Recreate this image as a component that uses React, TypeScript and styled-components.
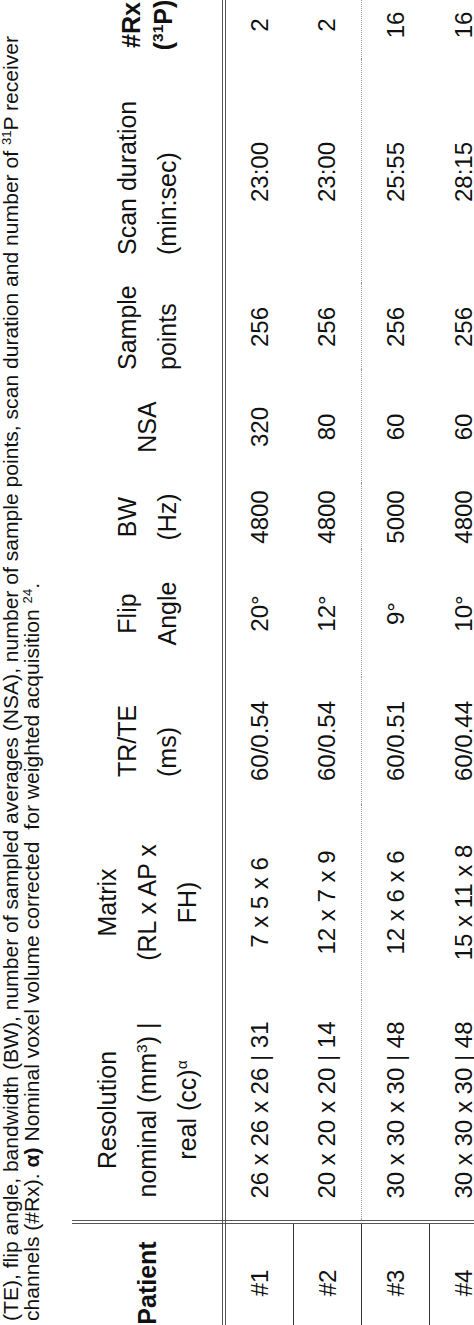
import { FC } from 'react'
import styled, { createGlobalStyle } from 'styled-components'

const GlobalStyle = createGlobalStyle`
  html, body {
    margin: 0;
    padding: 0;
    background: #fff;
    overflow: hidden;
  }
`

interface IColumn {
  width: number
  align?: 'left' | 'center'
  pad?: number
  lh?: number
  bold?: boolean
  head: React.ReactNode
}

const columns: IColumn[] = [
  { width: 120, bold: true, head: 'Patient' },
  {
    width: 222,
    head: (
      <>
        Resolution
        <br />
        nominal (mm<sup>3</sup>) |<br />
        real (cc)<sup>α</sup>
      </>
    ),
  },
  {
    width: 195,
    head: (
      <>
        Matrix
        <br />
        (RL x AP x<br />
        FH)
      </>
    ),
  },
  {
    width: 128,
    align: 'left',
    pad: 28,
    head: (
      <>
        TR/TE
        <br />
        (ms)
      </>
    ),
  },
  {
    width: 127,
    head: (
      <>
        Flip
        <br />
        Angle
      </>
    ),
  },
  {
    width: 66,
    head: (
      <>
        BW
        <br />
        (Hz)
      </>
    ),
  },
  { width: 114, head: 'NSA' },
  {
    width: 86,
    align: 'left',
    head: (
      <>
        Sample
        <br />
        points
      </>
    ),
  },
  {
    width: 224,
    align: 'left',
    pad: 29,
    head: (
      <>
        Scan duration
        <br />
        (min:sec)
      </>
    ),
  },
  {
    width: 70,
    bold: true,
    lh: 32,
    head: (
      <>
        #Rx
        <br />
        (<sup>31</sup>P)
      </>
    ),
  },
]

const rows = [
  ['#1', '26 x 26 x 26 | 31', '7 x 5 x 6', '60/0.54', '20°', '4800', '320', '256', '23:00', '2'],
  ['#2', '20 x 20 x 20 | 14', '12 x 7 x 9', '60/0.54', '12°', '4800', '80', '256', '23:00', '2'],
  ['#3', '30 x 30 x 30 | 48', '12 x 6 x 6', '60/0.51', '9°', '5000', '60', '256', '25:55', '16'],
  ['#4', '30 x 30 x 30 | 48', '15 x 11 x 8', '60/0.44', '10°', '4800', '60', '256', '28:15', '16'],
]

const App: FC = () => {
  return (
    <>
      <GlobalStyle />
      <Viewport>
        <Sheet>
          <Caption>
            (TE), flip angle, bandwidth (BW), number of sampled averages (NSA), number of sample
            points, scan duration and number of <sup>31</sup>P receiver
            <br />
            channels (#Rx). <b>α)</b> Nominal voxel volume corrected&nbsp; for weighted
            acquisition <sup>24</sup>.
          </Caption>
          <Table>
            <colgroup>
              {columns.map((c, i) => (
                <col key={i} style={{ width: c.width }} />
              ))}
            </colgroup>
            <thead>
              <tr>
                {columns.map((c, i) => (
                  <HeadCell
                    key={i}
                    $align={c.align ?? 'center'}
                    $pad={c.pad ?? 0}
                    $lh={c.lh ?? 40}
                    $bold={!!c.bold}
                    $first={i === 0}
                  >
                    {c.head}
                  </HeadCell>
                ))}
              </tr>
            </thead>
            <tbody>
              {rows.map((row, r) => (
                <tr key={r}>
                  {row.map((value, i) =>
                    i === 0 ? (
                      <PatientCell key={i}>{value}</PatientCell>
                    ) : (
                      <Cell key={i} $dotted={r === 1}>
                        {value}
                      </Cell>
                    ),
                  )}
                </tr>
              ))}
            </tbody>
          </Table>
        </Sheet>
      </Viewport>
    </>
  )
}

export default App

const Viewport = styled.div`
  width: 474px;
  height: 1325px;
  overflow: hidden;
  background: #fff;
`
// the page is printed sideways, so the whole sheet is turned a quarter to the left
const Sheet = styled.div`
  width: 1340px;
  height: 474px;
  transform-origin: top left;
  transform: translateY(1325px) rotate(-90deg);
  font-family: 'Liberation Sans', Arial, sans-serif;
  color: #111;
`
const Caption = styled.p`
  margin: 0 0 30px 4px;
  font-size: 21.1px;
  line-height: 21px;
  white-space: nowrap;
  sup {
    font-size: 0.62em;
    vertical-align: 0.5em;
    line-height: 0;
  }
  b {
    font-weight: bold;
  }
`
const Table = styled.table`
  border-collapse: collapse;
  table-layout: fixed;
  width: 1352px;
  margin-left: -17px;
  sup {
    font-size: 0.62em;
    vertical-align: 0.55em;
    line-height: 0;
  }
`
const HeadCell = styled.th<{ $align: string; $pad: number; $lh: number; $bold: boolean; $first: boolean }>`
  height: 150px;
  padding: 0 0 0 ${(p) => p.$pad}px;
  text-align: ${(p) => p.$align};
  vertical-align: middle;
  font-size: 25px;
  line-height: ${(p) => p.$lh}px;
  font-weight: ${(p) => (p.$bold ? 'bold' : 'normal')};
  white-space: nowrap;
  border-bottom: 4px double #555;
  border-right: ${(p) => (p.$first ? '4px double #555' : 'none')};
`
const Cell = styled.td<{ $dotted: boolean }>`
  height: 67px;
  padding: 0;
  text-align: center;
  vertical-align: middle;
  font-size: 24px;
  white-space: nowrap;
  border-bottom: ${(p) => (p.$dotted ? '1px dotted #999' : 'none')};
`
const PatientCell = styled.td`
  height: 67px;
  padding: 0;
  text-align: center;
  vertical-align: middle;
  font-size: 24px;
  white-space: nowrap;
  border-right: 4px double #555;
  border-bottom: 1px solid #333;
`
